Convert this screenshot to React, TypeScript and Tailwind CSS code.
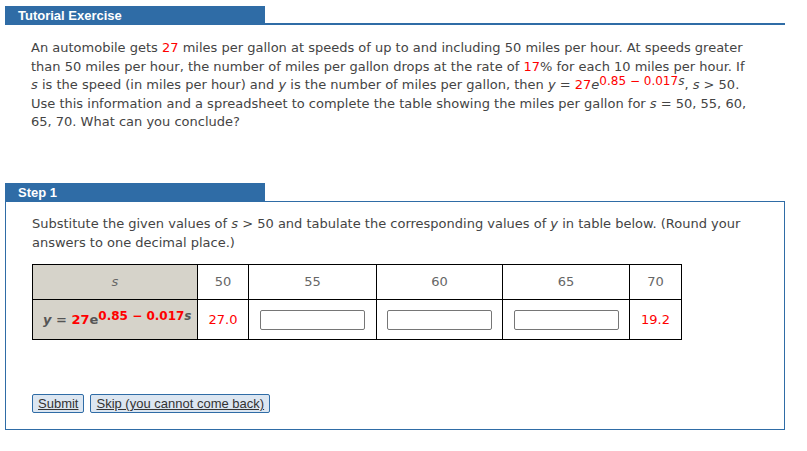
import React from 'react';

function Red({ children }: { children: React.ReactNode }) {
  return <span className="text-[#ff0000]">{children}</span>;
}

function Exponent({ bold = false }: { bold?: boolean }) {
  return (
    <sup className={`relative -top-[4px] text-[12px] ${bold ? 'font-bold' : ''}`}>
      <Red>0.85 − 0.017</Red>
      <i>s</i>
    </sup>
  );
}

function SectionHeader({ title, thin = false }: { title: string; thin?: boolean }) {
  return (
    <div className="flex items-end">
      <div
        className="flex h-[19px] w-[260px] items-center bg-[#2f6ca6] pl-[13px] text-[13px] font-bold leading-none text-white"
        style={{ fontFamily: '"Liberation Sans", Arial, sans-serif' }}
      >
        {title}
      </div>
      <div className={`flex-1 ${thin ? 'border-b' : 'border-b-2'} border-[#2f6ca6]`} />
    </div>
  );
}

function AnswerInput() {
  return <input type="text" className="h-[20px] w-[105px] rounded-[2px] border border-[#767676] bg-white" />;
}

export default function App() {
  const cell = 'border border-black text-center align-middle';
  return (
    <div
      className="h-[451px] w-[807px] bg-white pl-[5px] pt-[6px] text-[13px] text-[#444]"
      style={{ fontFamily: '"DejaVu Sans", Verdana, sans-serif' }}
    >
      <div className="w-[780px]">
        <SectionHeader title="Tutorial Exercise" />

        <p className="mt-[14px] whitespace-nowrap pl-[26px] leading-[18.6px]">
          An automobile gets <Red>27</Red> miles per gallon at speeds of up to and including 50 miles per hour. At speeds greater
          <br />
          than 50 miles per hour, the number of miles per gallon drops at the rate of <Red>17</Red>% for each 10 miles per hour. If
          <br />
          <i>s</i> is the speed (in miles per hour) and <i>y</i> is the number of miles per gallon, then <i>y</i> = <Red>27</Red>
          <i>e</i>
          <Exponent />, <i>s</i> &gt; 50.
          <br />
          Use this information and a spreadsheet to complete the table showing the miles per gallon for <i>s</i> = 50, 55, 60,
          <br />
          65, 70. What can you conclude?
        </p>

        <div className="mt-[51px]">
          <SectionHeader title="Step 1" thin />
        </div>

        <div className="h-[228px] border-x border-b border-[#2f6ca6] pl-[26px] pt-[13px]">
          <p className="whitespace-nowrap leading-[18.6px]">
            Substitute the given values of <i>s</i> &gt; 50 and tabulate the corresponding values of <i>y</i> in table below. (Round your
            <br />
            answers to one decimal place.)
          </p>

          <table className="mt-[12px] border-collapse text-[#666]">
            <tbody>
              <tr className="h-[35px]">
                <td className={`${cell} w-[165px] bg-[#d6d3ca]`}>
                  <i>s</i>
                </td>
                <td className={`${cell} w-[51px]`}>50</td>
                <td className={`${cell} w-[128px]`}>55</td>
                <td className={`${cell} w-[126px]`}>60</td>
                <td className={`${cell} w-[127px]`}>65</td>
                <td className={`${cell} w-[52px]`}>70</td>
              </tr>
              <tr className="h-[40px]">
                <td className="border border-black bg-[#d6d3ca] pl-[10px] text-left align-middle font-bold text-[#555]">
                  <i>y</i> = <Red>27</Red>e
                  <Exponent bold />
                </td>
                <td className={cell}>
                  <Red>27.0</Red>
                </td>
                <td className={cell}>
                  <AnswerInput />
                </td>
                <td className={cell}>
                  <AnswerInput />
                </td>
                <td className={cell}>
                  <AnswerInput />
                </td>
                <td className={cell}>
                  <Red>19.2</Red>
                </td>
              </tr>
            </tbody>
          </table>

          <div
            className="mt-[54px] flex gap-[6px] text-[13px] text-[#333]"
            style={{ fontFamily: '"Liberation Sans", Arial, sans-serif' }}
          >
            <button type="button" className="h-[19px] rounded-[2px] border border-[#2f6ca6] bg-[#dce6f1] px-[5px] leading-none underline">
              Submit
            </button>
            <button type="button" className="h-[19px] rounded-[2px] border border-[#2f6ca6] bg-[#dce6f1] px-[5px] leading-none underline">
              Skip (you cannot come back)
            </button>
          </div>
        </div>
      </div>
    </div>
  );
}
